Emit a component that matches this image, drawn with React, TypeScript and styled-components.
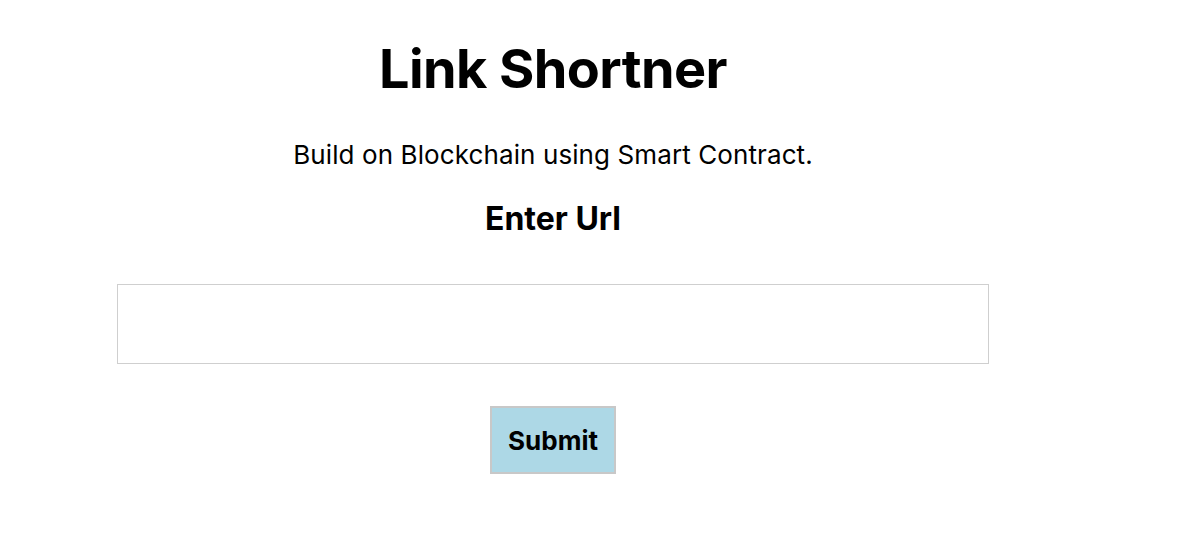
import React from "react";
import styled, { createGlobalStyle } from "styled-components";

const GlobalStyle = createGlobalStyle`
  html, body {
    margin: 0;
    padding: 0;
    background: #ffffff;
    font-family: Inter, "Noto Sans", "Liberation Sans", sans-serif;
    color: #000000;
  }
`;

const Page = styled.div`
  width: 872px;
  margin-left: 117px;
  padding-top: 34px;
  display: flex;
  flex-direction: column;
  align-items: center;
`;

const Title = styled.h1`
  margin: 0;
  font-size: 54px;
  font-weight: 700;
  line-height: 70px;
  letter-spacing: -0.6px;
`;

const Subtitle = styled.p`
  margin: 35px 0 0;
  font-size: 26px;
  font-weight: 400;
  line-height: 32px;
  letter-spacing: 0.1px;
`;

const Label = styled.h3`
  margin: 29px 0 0;
  font-size: 32px;
  font-weight: 700;
  line-height: 38px;
`;

const UrlInput = styled.input`
  box-sizing: border-box;
  margin-top: 46px;
  width: 100%;
  height: 80px;
  border: 1px solid #cfcfcf;
  border-radius: 0;
  padding: 0 16px;
  font-size: 24px;
  font-family: inherit;
  outline: none;
`;

const SubmitButton = styled.button`
  box-sizing: border-box;
  margin-top: 42px;
  width: 126px;
  height: 68px;
  background: #add8e6;
  border: 2px solid #c8c8c8;
  border-radius: 0;
  font-family: inherit;
  font-size: 26px;
  font-weight: 700;
  color: #000;
  cursor: pointer;
`;

export default function App() {
  return (
    <>
      <GlobalStyle />
      <Page>
        <Title>Link Shortner</Title>
        <Subtitle>Build on Blockchain using Smart Contract.</Subtitle>
        <Label>Enter Url</Label>
        <UrlInput type="text" />
        <SubmitButton type="button">Submit</SubmitButton>
      </Page>
    </>
  );
}
